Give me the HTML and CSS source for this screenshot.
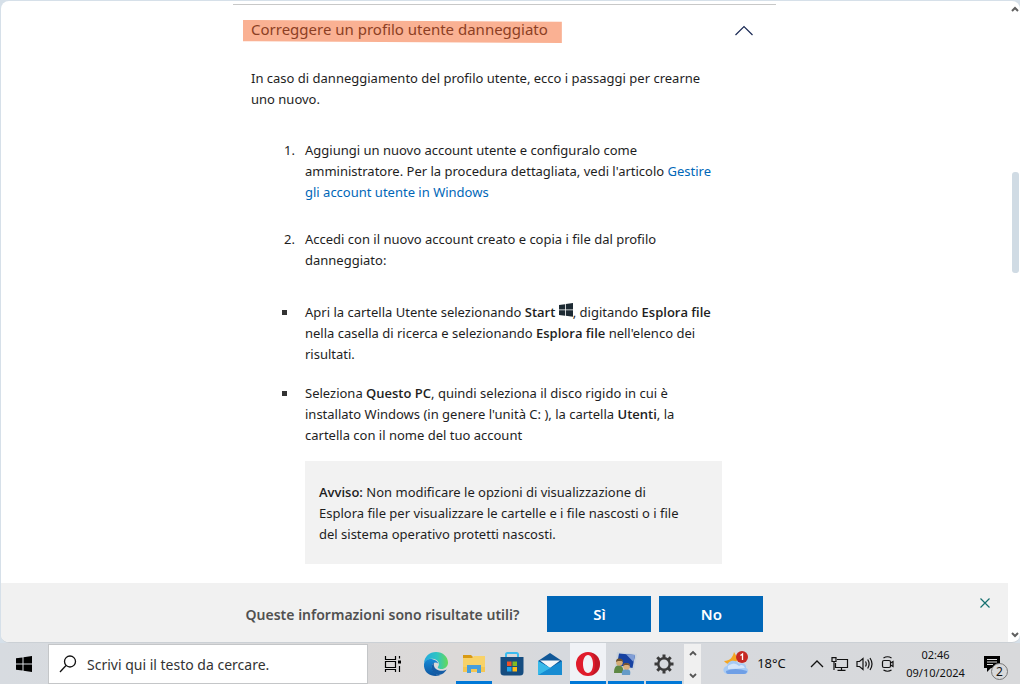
FILE: index.html
```html
<!DOCTYPE html>
<html lang="it">
<head>
<meta charset="utf-8">
<meta name="viewport" content="width=device-width, initial-scale=1">
<title>Correggere un profilo utente danneggiato</title>
<link rel="stylesheet" href="styles.css">
</head>
<body>
<div class="window">
  <div class="viewport">
    <main class="page">
      <article class="article">
        <header class="section-head">
          <h2 class="section-title">Correggere un profilo utente danneggiato</h2>
          <button class="toggle" aria-label="Comprimi"><svg width="20" height="12" viewBox="0 0 20 12"><path d="M1.500 10 10 1.500 18.500 10" fill="none" stroke="#1b2a55" stroke-width="1.200"/></svg></button>
        </header>
        <div class="section-body">
          <p class="intro">In caso di danneggiamento del profilo utente, ecco i passaggi per crearne<br>uno nuovo.</p>
          <ol class="steps">
            <li>Aggiungi un nuovo account utente e configuralo come<br>amministratore. Per la procedura dettagliata, vedi l'articolo <a href="#">Gestire<br>gli account utente in Windows</a></li>
            <li>Accedi con il nuovo account creato e copia i file dal profilo<br>danneggiato:</li>
          </ol>
          <ul class="details">
            <li>Apri la cartella Utente selezionando <b>Start</b> <svg class="win-inline" width="14" height="14" viewBox="0 0 14 14"><path d="M0 2 6 1.200V6.500H0ZM6.800 1.100 14 0V6.500H6.800ZM0 7.300H6V12.700L0 11.900ZM6.800 7.300H14V13.800L6.800 12.800Z" fill="#1d2a33"/></svg>, digitando <b>Esplora file</b><br>nella casella di ricerca e selezionando <b>Esplora file</b> nell'elenco dei<br>risultati.</li>
            <li>Seleziona <b>Questo PC</b>, quindi seleziona il disco rigido in cui è<br>installato Windows (in genere l'unità C: ), la cartella <b>Utenti</b>, la<br>cartella con il nome del tuo account
              <p class="note"><b>Avviso:</b> Non modificare le opzioni di visualizzazione di<br>Esplora file per visualizzare le cartelle e i file nascosti o i file<br>del sistema operativo protetti nascosti.</p>
            </li>
          </ul>
        </div>
      </article>
    </main>
    <section class="feedback">
      <div class="feedback-inner">
        <span class="question">Queste informazioni sono risultate utili?</span>
        <button class="answer">Sì</button>
        <button class="answer">No</button>
      </div>
      <button class="close" aria-label="Chiudi"><svg width="10" height="10" viewBox="0 0 10 10"><path d="M.5.500 9.500 9.500M9.500.500.500 9.500" stroke="#16706f" stroke-width="1.200"/></svg></button>
    </section>
  </div>
  <div class="scrollbar">
    <svg width="8" height="6" viewBox="0 0 8 6"><path d="M1 5 4 2 7 5" fill="none" stroke="#606060" stroke-width="2"/></svg>
    <div class="track"><div class="thumb"></div></div>
    <svg width="8" height="6" viewBox="0 0 8 6"><path d="M1 1 4 4 7 1" fill="none" stroke="#606060" stroke-width="2"/></svg>
  </div>
</div>

<footer class="taskbar">
  <button class="start" aria-label="Start"><svg width="16" height="16" viewBox="0 0 16 16"><path d="M0 2.300 6.500 1.400V7.500H0ZM7.500 1.200 16 0V7.500H7.500ZM0 8.500H6.500V14.600L0 13.700ZM7.500 8.500H16V16L7.500 14.800Z"/></svg></button>
  <label class="search">
    <svg width="18" height="18" viewBox="0 0 18 18" fill="none" stroke="#111" stroke-width="1.300"><circle cx="11" cy="6.500" r="5.500"/><path d="M7 10.500 1 17"/></svg>
    <input type="text" placeholder="Scrivi qui il testo da cercare." aria-label="Cerca">
  </label>
  <button class="taskview" aria-label="Visualizzazione attività"><svg width="18" height="16" viewBox="0 0 18 16" fill="none" stroke="#000" stroke-width="1.200"><path d="M1.500 0V3.500H11.500V0M1.500 16V13.500H11.500V16M1.500 5.500H11.500V11.500H1.500ZM15.500 0V2.500M15.500 10V16"/><path d="M14 4.500H17V7.500H14Z" fill="#000" stroke="none"/></svg></button>
  <nav class="apps">
    <button class="app" aria-label="Edge"><svg width="24" height="24" viewBox="0 0 24 24"><defs><linearGradient id="edgeTop"><stop stop-color="#24a9df"/><stop offset=".55" stop-color="#2fc5c2"/><stop offset="1" stop-color="#67d957"/></linearGradient><linearGradient id="edgeSide" x2="0" y2="1"><stop stop-color="#168bd8"/><stop offset="1" stop-color="#0f559f"/></linearGradient></defs><path d="M0 11C.5 4.500 5.500 0 12 0 19 0 24 5 24 10.500 24 14.500 21 17 17.500 17 14.500 17 13 15.800 14.200 14.500 16 12.300 14.500 8 10 7 6 6 2 8 0 11Z" fill="url(#edgeTop)"/><path d="M0 12C.8 8 5 6.500 8.500 7.200 11.500 7.800 13.500 9.500 14.300 11.500 10.500 9 7 12 8 16.500 9 21.500 14 24.500 18.500 22 10 27-1 22 0 12Z" fill="url(#edgeSide)"/><path d="M10.300 10.600C6.500 13 6.500 19 11 22 15.500 24.500 20.500 21.500 22.700 17.500 17.500 20.500 11 18 10 14 9.600 12.500 9.800 11.500 10.300 10.600Z" fill="#155ca5"/></svg></button>
    <button class="app open" aria-label="Esplora file"><svg width="22" height="20" viewBox="0 0 22 20"><path d="M0 1H8L10 3V6H0Z" fill="#d99a13"/><path d="M0 4H9L11 2H22V18H0Z" fill="#f8d268"/><path d="M0 13H22V18H0Z" fill="#f5c752"/><path d="M4 19V11H18V19H14V15H8V19Z" fill="#479edb"/></svg></button>
    <button class="app" aria-label="Microsoft Store"><svg width="24" height="24" viewBox="0 0 24 24"><path d="M6 6V2.500Q6 1 7.500 1H16.500Q18 1 18 2.500V6" fill="none" stroke="#3bbcf0" stroke-width="2"/><path d="M.5 5H23.500V20Q23.500 23.500 20 23.500H4Q.5 23.500.5 20Z" fill="#164d80"/><path d="M7 9.500H11.500V14H7Z" fill="#f05125"/><path d="M12.500 9.500H17V14H12.500Z" fill="#80bb21"/><path d="M7 15H11.500V19.500H7Z" fill="#20a5ed"/><path d="M12.500 15H17V19.500H12.500Z" fill="#ffbb15"/></svg></button>
    <button class="app" aria-label="Posta"><svg width="24" height="22" viewBox="0 0 24 22"><path d="M0 8 12 0 24 8V21H0Z" fill="#105797"/><path d="M2 7.500H22L12 15Z" fill="#f5f7fa"/><path d="M0 8 24 22H0Z" fill="#23b6ed"/><path d="M24 8 0 22H24Z" fill="#188cd2"/><path d="M0 8 12 15 0 22Z" fill="#39b9e9"/></svg></button>
    <button class="app open active" aria-label="Opera"><svg width="24" height="24" viewBox="0 0 24 24"><path fill="#e01b2b" fill-rule="evenodd" d="M12 0A12 12 0 1 0 12 24 12 12 0 1 0 12 0ZM12 3C15 3 17 7 17 12S15 21 12 21 7 17 7 12 9 3 12 3Z"/><path d="M15 .5C20.500 2 24 6 24 12S20.500 22 15 23.500C18 21 19 17 19 12S18 3 15 .5Z" fill="#a51422" opacity=".5"/></svg></button>
    <button class="app open" aria-label="Utenti"><svg width="24" height="24" viewBox="0 0 24 24"><path d="M3 0 23 2 20 18 1 15Z" fill="#c9d2dc"/><path d="M5 1.500 21 3 18.500 16 3 13Z" fill="#1742a2"/><path d="M12 2.200 21 3 19.500 10Z" fill="#819ed6"/><path d="M0 21C0 15 2 13.500 5 13.500S10 16 9 21Z" fill="#5e8844"/><circle cx="5.500" cy="10.500" r="3.300" fill="#d6ad76"/><path d="M2 10Q2 6 5.500 6.500 9 6.500 9 10L7.500 9 4 9Z" fill="#70532e"/><path d="M8 23C7 19 9.500 17 12.500 17S17 19 16 23Z" fill="#659bc8"/><circle cx="12.500" cy="14.500" r="3.300" fill="#dbb07e"/><path d="M9 14Q9 10.500 12.500 11 16 11 16 14L14 13 11 13Z" fill="#735334"/></svg></button>
    <button class="app open" aria-label="Impostazioni"><svg width="20" height="20" viewBox="-10 -10 20 20"><g fill="none" stroke="#3b3b3b"><circle r="5.700" stroke-width="2.400"/><path d="M0-9.500V-6M0 9.500V6M-9.500 0H-6M9.500 0H6M-6.700-6.700-4.300-4.300M6.700 6.700 4.300 4.300M-6.700 6.700-4.300 4.300M6.700-6.700 4.300-4.300" stroke-width="3"/></g></svg></button>
  </nav>
  <div class="pager">
    <button aria-label="Su"><svg width="8" height="6" viewBox="0 0 8 6"><path d="M1 5 4 2 7 5" fill="none" stroke="#555" stroke-width="1.800"/></svg></button>
    <button aria-label="Giù"><svg width="8" height="6" viewBox="0 0 8 6"><path d="M1 1 4 4 7 1" fill="none" stroke="#555" stroke-width="1.800"/></svg></button>
  </div>
  <button class="weather"><svg width="26" height="26" viewBox="0 0 26 26"><path d="M11 1C10 6 7 10 1 10 5 15 12 14 15 8Z" fill="#f5a623"/><path d="M5 23C-1 23-1 16 4 15 5 9 13 8 16 13 20 11 24 14 23 17 27 19 25 23 21 23Z" fill="#a6caf5"/><path d="M3 20Q12 16 24 20 24 23 21 23H5Q3 23 3 20Z" fill="#6f9fe6"/><path d="M5 15Q11 10 16 15 20 12 22 17 13 18 5 18Z" fill="#d5e6fb"/><circle cx="19" cy="6" r="6" fill="#c62923"/><path d="M17.500 4.500 19.500 3V9" fill="none" stroke="#fff" stroke-width="1.300"/></svg><span>18°C</span></button>
  <div class="tray">
    <button aria-label="Mostra icone nascoste"><svg width="14" height="8" viewBox="0 0 14 8"><path d="M1 7 7 1 13 7" fill="none" stroke="#111" stroke-width="1.300"/></svg></button>
    <button aria-label="Rete"><svg width="18" height="14" viewBox="0 0 18 14" fill="none" stroke="#111" stroke-width="1.200"><path d="M6 2.500H16.500V10.500H4.500V6M10.500 10.500V13M6.500 13.400H14.500"/><path d="M1 .6H5V4.500H1ZM3 4.500V13"/></svg></button>
    <button aria-label="Volume"><svg width="18" height="14" viewBox="0 0 18 14" fill="none" stroke="#111" stroke-width="1.200"><path d="M1 4.500H3.500L7 1.500V12.500L3.500 9.500H1ZM9.500 4.500Q11 7 9.500 9.500M11.700 2.500Q14.500 7 11.700 11.500M14 1Q18 7 14 13"/></svg></button>
    <button aria-label="Riunione"><svg width="14" height="16" viewBox="0 0 14 16" fill="none" stroke="#111" stroke-width="1.200"><rect x="1.500" y="4.500" width="8" height="7" rx="1.500"/><path d="M9.500 7 12 5.500V10.500L9.500 9M2.500 2Q6.500-.5 10.500 2M2.500 14Q6.500 16.500 10.500 14"/></svg></button>
  </div>
  <button class="clock"><span>02:46</span><span>09/10/2024</span></button>
  <button class="notifications" aria-label="2 notifiche"><svg width="16" height="16" viewBox="0 0 16 16"><path d="M0 0H16V12H7L3 16V12H0Z"/><path d="M3 3.500H13M3 6H13M3 8.500H9" stroke="#ddd"/></svg><span class="badge">2</span></button>
</footer>
</body>
</html>
```
FILE: styles.css
```css
* { box-sizing: border-box; }

body {
  margin: 0;
  min-height: 100vh;
  display: flex;
  flex-direction: column;
  background: #d6e0e9;
  color: #1e1e1e;
  font-family: "Segoe UI", "Noto Sans", "Open Sans", sans-serif;
  font-size: 13px;
  line-height: 21px;
}

button {
  border: 0;
  padding: 0;
  background: none;
  color: inherit;
  font: inherit;
}

svg { display: block; flex: none; }

b {
  font-family: "Segoe UI", "Open Sans", sans-serif;
  font-weight: 600;
  line-height: 1;
}

.window {
  flex: 1;
  display: flex;
  margin: 1px 0 0 1px;
  background: #fff;
  border-radius: 8px;
  overflow: hidden;
  border-bottom: 1px solid #cbd0d5;
}

.viewport {
  flex: 1;
  display: flex;
  flex-direction: column;
}

.page { flex: 1; padding-top: 3px; }

.article {
  max-width: 543px;
  margin: 0 auto;
  border-top: 1px solid #c8c8c8;
}

.section-head {
  display: flex;
  justify-content: space-between;
  align-items: center;
  padding: 15px 22px 0 10px;
}

.section-title {
  margin: 0;
  padding: 0 14px 4px 8px;
  background: #fab193;
  color: #8c3f24;
  clip-path: polygon(0 0, 100% 8%, 100% 100%, 0 92%);
  font-size: 15px;
  font-weight: 400;
  line-height: 19px;
}

.toggle { padding-bottom: 2px; }
.section-body { padding: 25px 54px 0 18px; }
.intro { margin: 0; white-space: nowrap; }

.steps, .details {
  margin: 30px 0 0;
  padding-left: 54px;
  list-style: none;
  white-space: nowrap;
}

.steps { counter-reset: step; }
.steps li { position: relative; counter-increment: step; }
.steps li + li { margin-top: 26px; }

.steps li::before {
  content: counter(step) ".";
  position: absolute;
  left: -21px;
}

.steps a { color: #0067b8; text-decoration: none; }

.details { margin-top: 31px; }
.details li { position: relative; }
.details li + li { margin-top: 18px; }

.details li::before {
  content: "";
  position: absolute;
  left: -23px;
  top: 8px;
  width: 5px;
  height: 5px;
  background: #333;
}

.win-inline { display: inline-block; }

.note {
  margin: 15px 0 0;
  padding: 21px 14px 19px;
  background: #f2f2f2;
}

.feedback {
  display: grid;
  grid-template-columns: 1fr auto 1fr;
  align-items: center;
  height: 59px;
  padding-top: 3px;
  background: #f1f1f1;
}

.feedback-inner {
  grid-column: 2;
  display: flex;
  align-items: center;
  gap: 8px;
}

.question {
  margin-right: 20px;
  color: #505050;
  font-size: 14px;
  font-weight: 600;
}

.answer {
  width: 104px;
  height: 36px;
  background: #0067b8;
  color: #fff;
  font-size: 15px;
  font-weight: 600;
}

.close {
  justify-self: end;
  align-self: start;
  padding: 12px 18px;
}

.scrollbar {
  display: flex;
  flex-direction: column;
  align-items: flex-end;
  width: 12px;
  padding: 5px 1px 4px 0;
}

.track { flex: 1; padding-top: 160px; }

.thumb {
  width: 7px;
  height: 101px;
  border-radius: 3px;
  background: #d0dbe4;
}

.taskbar {
  display: flex;
  align-items: stretch;
  height: 41px;
  padding-right: 12px;
  background: linear-gradient(90deg, #d7dbe0, #dcd9d8 45%, #d6d9de 55%, #d8d9db);
  color: #111;
}

.taskbar button {
  display: flex;
  align-items: center;
  justify-content: center;
}

.start { width: 48px; }

.search {
  flex: 1;
  display: flex;
  align-items: center;
  gap: 10px;
  margin-top: 1px;
  padding-left: 10px;
  background: #fff;
  border: 1px solid #c4c6c8;
}

.search input {
  flex: 1;
  min-width: 0;
  border: 0;
  padding: 0;
  outline: 0;
  background: none;
  font: inherit;
  font-size: 14px;
}

.search input::placeholder { color: #333; opacity: 1; }
.taskview { width: 50px; }

.apps {
  display: grid;
  grid-template-columns: repeat(7, 36px);
  gap: 2px;
}

.app { border-bottom: 3px solid transparent; padding-top: 3px; }
.taskbar .open { border-bottom: 3px solid #0078d7; }
.app.active { background: #f0f2f6; }

.pager {
  display: flex;
  flex-direction: column;
  justify-content: space-between;
  align-items: center;
  width: 17px;
  margin: 1px 22px 0 2px;
  padding: 6px 0 5px;
  background: #f0f0f0;
}

.weather { gap: 8px; width: 63px; }

.tray {
  display: flex;
  align-items: center;
  gap: 7px;
  margin-left: 24px;
}

.taskbar .clock {
  flex-direction: column;
  width: 81px;
  font-size: 11px;
  line-height: 18px;
}

.notifications { position: relative; width: 32px; }

.badge {
  position: absolute;
  right: 0;
  bottom: 4px;
  width: 17px;
  height: 17px;
  border: 1px solid #777;
  border-radius: 50%;
  background: #d8d9db;
  font-size: 12px;
  line-height: 15px;
}
```
